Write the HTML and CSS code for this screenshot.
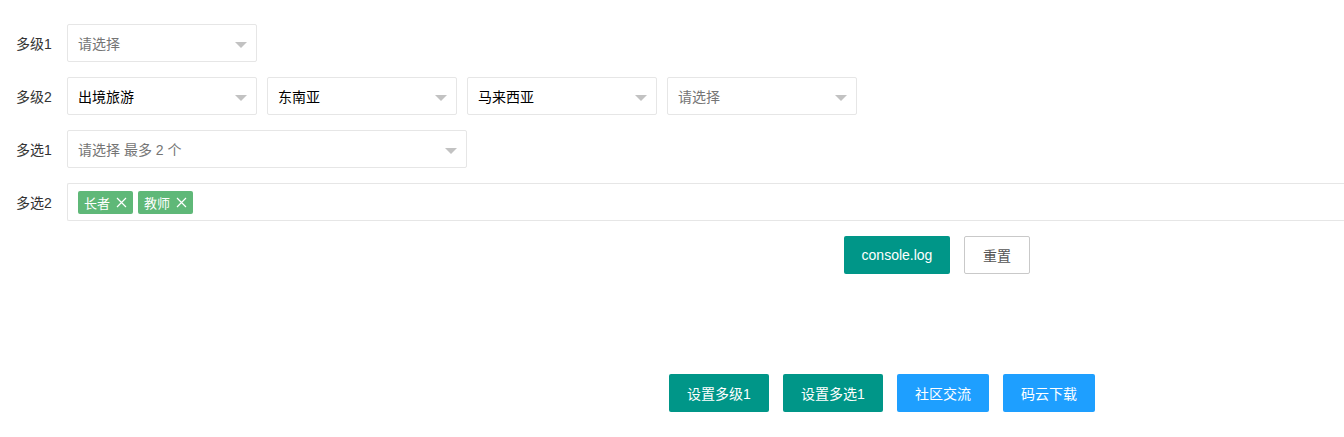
FILE: index.html
```html
<!DOCTYPE html>
<html lang="zh">

<head>
    <meta charset="UTF-8">
    <title>xm-select demo</title>
    <link rel="stylesheet" href="styles.css">
</head>

<body>
    <form class="demo-form">
        <div class="form-item">
            <label class="form-label">多级1</label>
            <div class="select">
                <span class="placeholder">请选择</span>
                <i class="arrow"></i>
            </div>
        </div>

        <div class="form-item">
            <label class="form-label">多级2</label>
            <div class="select"><span>出境旅游</span><i class="arrow"></i></div>
            <div class="select"><span>东南亚</span><i class="arrow"></i></div>
            <div class="select"><span>马来西亚</span><i class="arrow"></i></div>
            <div class="select"><span class="placeholder">请选择</span><i class="arrow"></i></div>
        </div>

        <div class="form-item">
            <label class="form-label">多选1</label>
            <div class="select select-wide">
                <span class="placeholder">请选择 最多 2 个</span>
                <i class="arrow"></i>
            </div>
        </div>

        <div class="form-item">
            <label class="form-label">多选2</label>
            <div class="select select-full">
                <span class="tag">长者
                    <svg class="tag-close" width="11" height="11" viewBox="0 0 11 11">
                        <path d="M1 1L10 10M10 1L1 10" stroke="#fff" stroke-width="1.2" fill="none" />
                    </svg>
                </span>
                <span class="tag">教师
                    <svg class="tag-close" width="11" height="11" viewBox="0 0 11 11">
                        <path d="M1 1L10 10M10 1L1 10" stroke="#fff" stroke-width="1.2" fill="none" />
                    </svg>
                </span>
            </div>
        </div>

        <div class="form-actions">
            <button type="button" class="btn btn-log">console.log</button>
            <button type="reset" class="btn btn-primary">重置</button>
        </div>
    </form>

    <div class="bottom-buttons">
        <button class="btn btn-bottom">设置多级1</button>
        <button class="btn btn-bottom">设置多选1</button>
        <button class="btn btn-bottom btn-normal">社区交流</button>
        <button class="btn btn-bottom btn-normal">码云下载</button>
    </div>
</body>

</html>
```

FILE: styles.css
```css
body {
    margin: 0;
    padding: 0;
    font-family: "Liberation Sans", "Noto Sans CJK SC", sans-serif;
    font-size: 14px;
    color: #333;
    background-color: #fff;
}

.demo-form {
    padding-top: 24px;
}

.form-item {
    display: flex;
    align-items: center;
    margin-bottom: 15px;
}

.form-label {
    flex-shrink: 0;
    width: 67px;
    padding-left: 16px;
    box-sizing: border-box;
    font-size: 14px;
    color: #333;
}

.select {
    position: relative;
    display: flex;
    align-items: center;
    flex-shrink: 0;
    width: 190px;
    height: 38px;
    box-sizing: border-box;
    border: 1px solid #e6e6e6;
    border-radius: 2px;
    padding-left: 10px;
    margin-right: 10px;
    color: #000;
    font-size: 14px;
}

.select .placeholder {
    color: #757575;
}

.select-wide {
    width: 400px;
}

.select-full {
    flex: 1;
    margin-right: 0;
    border-right: none;
    border-radius: 2px 0 0 2px;
    gap: 5px;
}

.arrow {
    position: absolute;
    right: 9px;
    top: 17px;
    width: 0;
    height: 0;
    border-left: 6px solid transparent;
    border-right: 6px solid transparent;
    border-top: 6px solid #c2c2c2;
}

.tag {
    display: inline-flex;
    align-items: center;
    height: 23px;
    padding: 0 6px 0 6px;
    border-radius: 2px;
    background-color: #5fb878;
    color: #fff;
    font-size: 13px;
}

.tag-close {
    margin-left: 6px;
}

.form-actions {
    display: flex;
    padding-left: 844px;
    gap: 14px;
}

.btn {
    height: 38px;
    padding: 0 18px;
    border: none;
    border-radius: 2px;
    background-color: #009688;
    color: #fff;
    font-family: "Liberation Sans", "Noto Sans CJK SC", sans-serif;
    font-size: 14px;
    cursor: pointer;
}

.btn-log {
    width: 106px;
    padding: 0;
}

.btn-primary {
    width: 66px;
    padding: 0;
    border: 1px solid #c9c9c9;
    background-color: #fff;
    color: #555;
}

.bottom-buttons {
    display: flex;
    gap: 14px;
    padding-left: 669px;
    margin-top: 100px;
}

.btn-bottom {
    width: 100px;
    padding: 0;
}

.btn-normal {
    width: 92px;
    background-color: #1e9fff;
}
```
